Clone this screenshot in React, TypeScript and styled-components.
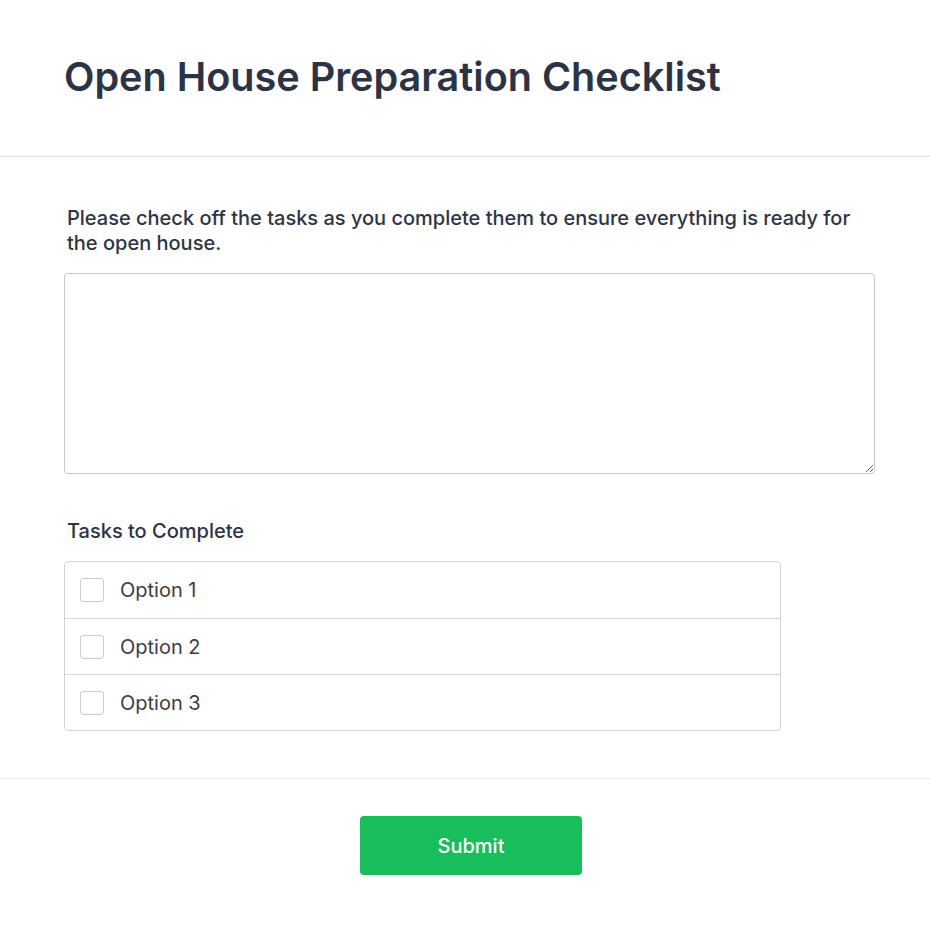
import React from 'react';
import styled, { createGlobalStyle } from 'styled-components';

const GlobalStyle = createGlobalStyle`
  html, body {
    margin: 0;
    padding: 0;
    background: #ffffff;
  }
  body {
    font-family: Inter, "Noto Sans", sans-serif;
    color: #2d3748;
  }
`;

const Page = styled.div`
  width: 930px;
  min-height: 925px;
  background: #ffffff;
`;

const Header = styled.header`
  padding: 53px 64px 55px;
  border-bottom: 1px solid #d9dce3;
`;

const Title = styled.h1`
  margin: 0;
  font-size: 39.6px;
  line-height: 48px;
  font-weight: 600;
  color: #2b3344;
`;

const Body = styled.main`
  padding: 49px 55px 47px 64px;
  border-bottom: 1px solid #e6e8ec;
`;

const Field = styled.div`
  display: flex;
  flex-direction: column;
  gap: 17px;
  & + & {
    margin-top: 45px;
  }
`;

const Label = styled.label`
  padding-left: 3px;
  font-size: 20px;
  line-height: 25px;
  font-weight: 500;
  color: #2d3445;
`;

const TextArea = styled.textarea`
  box-sizing: border-box;
  width: 811px;
  height: 201px;
  margin: 0;
  padding: 12px;
  border: 1px solid #c5c7d3;
  border-radius: 4px;
  font-family: Inter, sans-serif;
  font-size: 16px;
  resize: vertical;
  outline: none;
`;

const Checklist = styled.div`
  width: 715px;
  border: 1px solid #d2d3d8;
  border-radius: 4px;
  overflow: hidden;
`;

const OptionRow = styled.label`
  display: flex;
  align-items: center;
  gap: 16px;
  height: 56px;
  padding: 0 15px;
  box-sizing: border-box;
  cursor: pointer;
  & + & {
    border-top: 1px solid #d2d3d8;
  }
`;

const Box = styled.input.attrs({ type: 'checkbox' })`
  appearance: none;
  margin: 0;
  width: 24px;
  height: 24px;
  border: 1px solid #c8cad4;
  border-radius: 3px;
  background: #ffffff;
  &:checked {
    background: #18be5b;
    border-color: #18be5b;
  }
`;

const OptionText = styled.span`
  font-size: 20px;
  font-weight: 400;
  color: #3c3d47;
`;

const Footer = styled.footer`
  display: flex;
  justify-content: center;
  padding: 37px 0 50px 12px;
`;

const SubmitButton = styled.button`
  width: 222px;
  height: 59px;
  border: none;
  border-radius: 4px;
  background: #18be5b;
  color: #ffffff;
  font-family: Inter, sans-serif;
  font-size: 20px;
  font-weight: 500;
  cursor: pointer;
`;

const options = ['Option 1', 'Option 2', 'Option 3'];

const App: React.FC = () => (
  <Page>
    <GlobalStyle />
    <Header>
      <Title>Open House Preparation Checklist</Title>
    </Header>
    <Body>
      <Field>
        <Label htmlFor="notes">
          Please check off the tasks as you complete them to ensure everything is ready for
          the open house.
        </Label>
        <TextArea id="notes" />
      </Field>
      <Field>
        <Label as="div">Tasks to Complete</Label>
        <Checklist>
          {options.map((opt) => (
            <OptionRow key={opt}>
              <Box />
              <OptionText>{opt}</OptionText>
            </OptionRow>
          ))}
        </Checklist>
      </Field>
    </Body>
    <Footer>
      <SubmitButton type="button">Submit</SubmitButton>
    </Footer>
  </Page>
);

export default App;
